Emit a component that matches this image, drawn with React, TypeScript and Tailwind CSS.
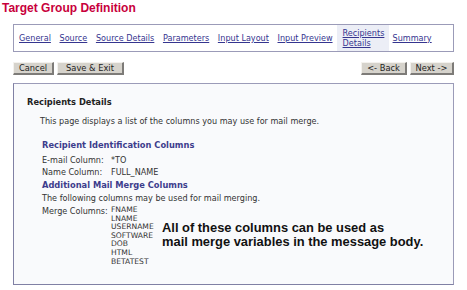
import React from "react";

const links = [
  "General",
  "Source",
  "Source Details",
  "Parameters",
  "Input Layout",
  "Input Preview",
];

function Btn({ children, className = "" }: { children: React.ReactNode; className?: string }) {
  return (
    <button
      className={
        "h-[13px] bg-[#d6d3cc] border-t border-l border-t-[#f4f2ee] border-l-[#f4f2ee] border-b-2 border-r-2 border-b-[#7d7b78] border-r-[#7d7b78] text-[8.3px] leading-[10px] text-[#222] font-['DejaVu_Sans'] flex items-center justify-center whitespace-nowrap " +
        className
      }
    >
      {children}
    </button>
  );
}

export default function App() {
  const merge = ["FNAME", "LNAME", "USERNAME", "SOFTWARE", "DOB", "HTML", "BETATEST"];
  return (
    <div className="w-[467px] h-[290px] bg-white overflow-hidden font-['DejaVu_Sans',sans-serif] text-[#333] whitespace-nowrap">
      <div className="pl-[2px] pt-[1px] h-[24px] text-[12px] leading-[14px] text-[#c8003c] font-['Liberation_Sans',sans-serif] font-bold">
        Target Group Definition
      </div>

      <div className="mx-[13px] h-[28px] border border-[#9b9bb8] flex items-stretch pl-[5px] text-[8.1px] leading-[10px] text-[#35358f]">
        <div className="flex items-center gap-[8.6px]">
          {links.map((l) => (
            <a key={l} className="underline">
              {l}
            </a>
          ))}
        </div>
        <div className="ml-[4px] w-[52px] bg-[#eceef6] flex items-center pl-[6px]">
          <a className="underline leading-[10px]">
            Recipients
            <br />
            Details
          </a>
        </div>
        <div className="flex items-center ml-[4px]">
          <a className="underline">Summary</a>
        </div>
      </div>

      <div className="mx-[13px] mt-[10px] h-[13px] flex justify-between">
        <div className="flex gap-[3px]">
          <Btn className="w-[41px]">Cancel</Btn>
          <Btn className="w-[67px]">Save &amp; Exit</Btn>
        </div>
        <div className="flex gap-[3px]">
          <Btn className="w-[46px]">&lt;- Back</Btn>
          <Btn className="w-[44px]">Next -&gt;</Btn>
        </div>
      </div>

      <div className="mx-[13px] mt-[8px] h-[202px] border border-[#9b9bb8] border-l-[#8080a4] border-b-[#8080a4] bg-[#f9fafc] pl-[13px] pt-[13px] text-[8.1px] leading-[10px]">
        <div className="font-bold text-[#222] text-[8.3px]">Recipients Details</div>
        <div className="mt-[9px] pl-[13px]">
          This page displays a list of the columns you may use for mail merge.
        </div>
        <div className="pl-[15px] mt-[14px]">
          <div className="font-bold text-[#3d3d8c] text-[8.3px]">Recipient Identification Columns</div>
          <div className="mt-[5px] flex">
            <span className="w-[69px] shrink-0">E-mail Column:</span>
            <span>*TO</span>
          </div>
          <div className="mt-[2px] flex">
            <span className="w-[69px] shrink-0">Name Column:</span>
            <span>FULL_NAME</span>
          </div>
          <div className="mt-[3px] font-bold text-[#3d3d8c] text-[8.3px]">Additional Mail Merge Columns</div>
          <div className="mt-[3px]">The following columns may be used for mail merging.</div>
          <div className="mt-[3px] flex">
            <span className="w-[69px] shrink-0">Merge Columns:</span>
            <div className="w-[51px] shrink-0 flex flex-col text-[7.6px] leading-[8.6px]">
              {merge.map((m) => (
                <span key={m}>{m}</span>
              ))}
            </div>
            <div className="mt-[15px] font-['Liberation_Sans',sans-serif] font-bold text-[12.9px] leading-[14px] text-[#111]">
              All of these columns can be used as
              <br />
              mail merge variables in the message body.
            </div>
          </div>
        </div>
      </div>
    </div>
  );
}
